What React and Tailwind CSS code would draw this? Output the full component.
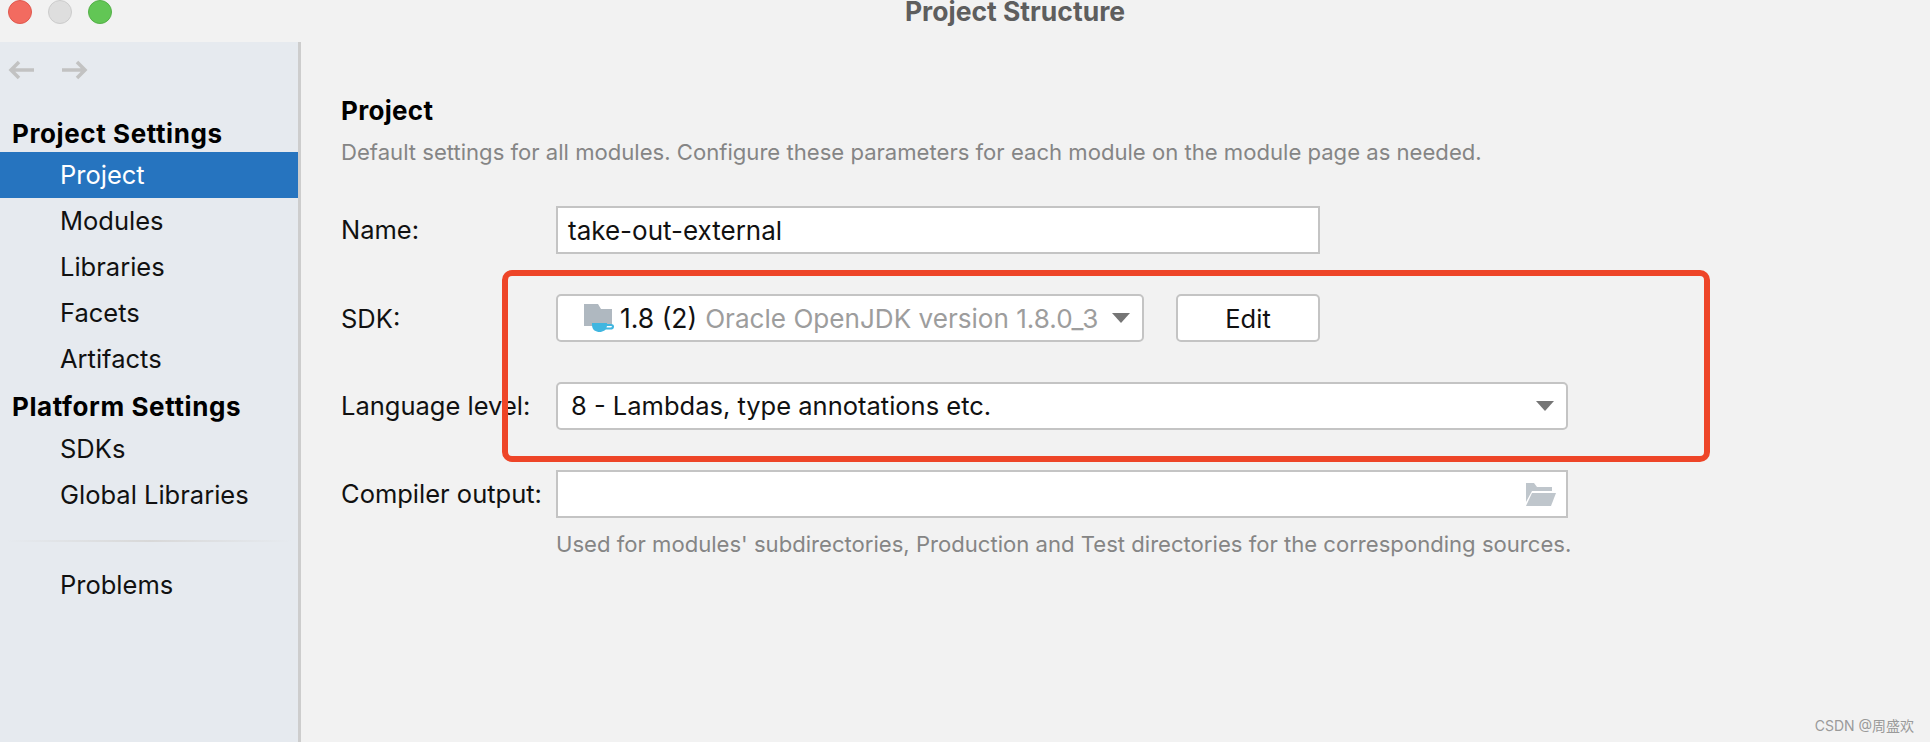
import React from 'react';

function NavItem({ label, active }) {
  return (
    <div className={`h-[46px] flex items-center pl-[60px] text-[25.5px] ${active ? 'bg-[#2674bf] text-white' : 'text-[#111111]'}`}>
      {label}
    </div>
  );
}

function Caret() {
  return (
    <svg width="18" height="10" viewBox="0 0 18 10" className="shrink-0">
      <path d="M0 0H18L9 10Z" fill="#757575" />
    </svg>
  );
}

function JdkIcon() {
  return (
    <svg width="30" height="28" viewBox="0 0 30 28" className="shrink-0">
      <path d="M0 0H14L17 5H28V22H0Z" fill="#afb8c0" />
      <path d="M8 19H23V21C23 26 19 28 15.5 28C12 28 8 26 8 21Z" fill="#40b6e0" />
      <path d="M22 21H27C30 21 29.5 24.5 26.5 24.5H21" fill="none" stroke="#40b6e0" strokeWidth="2" />
    </svg>
  );
}

function FolderOpenIcon() {
  return (
    <svg width="30" height="23" viewBox="0 0 30 23">
      <path d="M0 0H8L11 4H26V8H6L0 19Z" fill="#bfc6cc" />
      <path d="M6 10H30L25 23H0Z" fill="#bfc6cc" />
    </svg>
  );
}

function FormRow({ label, children }) {
  return (
    <div className="flex items-center h-[48px] mb-[40px]">
      <div className="w-[215px] shrink-0 text-[25.5px] text-[#111111]">{label}</div>
      {children}
    </div>
  );
}

export default function App() {
  return (
    <div className="relative w-full h-[742px] overflow-hidden bg-[#f2f2f2] font-['Inter',sans-serif]">
      {/* title bar */}
      <div className="relative h-[42px]">
        <div className="absolute left-[8px] top-0 w-[24px] h-[24px] rounded-full bg-[#f26b60] border border-[#e0584e]" />
        <div className="absolute left-[48px] top-0 w-[24px] h-[24px] rounded-full bg-[#dedede] border border-[#cccccc]" />
        <div className="absolute left-[88px] top-0 w-[24px] h-[24px] rounded-full bg-[#62c655] border border-[#54b048]" />
        <div className="text-center pl-[100px] text-[26.5px] leading-[22px] font-bold text-[#5e5e5e]">Project Structure</div>
      </div>

      <div className="flex h-[700px]">
        <aside className="w-[301px] shrink-0 bg-[#e6eaef] border-r-[3px] border-[#cdcdcd]">
          <div className="flex items-center gap-[28px] pl-[8px] h-[28px] mt-[14px] text-[#c2c2c2]">
            <svg width="26" height="20" viewBox="0 0 26 20">
              <path d="M26 10H3M11 2L3 10L11 18" fill="none" stroke="currentColor" strokeWidth="3.5" />
            </svg>
            <svg width="26" height="20" viewBox="0 0 26 20">
              <path d="M0 10H23M15 2L23 10L15 18" fill="none" stroke="currentColor" strokeWidth="3.5" />
            </svg>
          </div>
          <div className="mt-[22px]">
            <div className="h-[46px] flex items-center pt-[8px] pl-[12px] text-[26px] tracking-[0.6px] font-bold text-black">Project Settings</div>
            <NavItem label="Project" active />
            <NavItem label="Modules" />
            <NavItem label="Libraries" />
            <NavItem label="Facets" />
            <NavItem label="Artifacts" />
            <div className="h-[44px] flex items-center pt-[4px] pl-[12px] text-[26px] tracking-[0.6px] font-bold text-black">Platform Settings</div>
            <NavItem label="SDKs" />
            <NavItem label="Global Libraries" />
            <div className="h-[2px] mx-[6px] mt-[22px] mb-[20px] bg-gradient-to-r from-transparent via-[#d8d8d8] to-transparent" />
            <NavItem label="Problems" />
          </div>
        </aside>

        <main className="flex-1 pl-[40px]">
          <h1 className="mt-[53px] text-[26px] leading-[32px] tracking-[0.3px] font-bold text-black">Project</h1>
          <p className="mt-[9px] text-[22.1px] leading-[32px] text-[#858585]">
            Default settings for all modules. Configure these parameters for each module on the module page as needed.
          </p>

          <div className="mt-[38px]">
            <FormRow label="Name:">
              <div className="w-[764px] h-full flex items-center bg-white border-2 border-[#c4c4c4] pl-[10px] text-[26px] text-[#111111]">
                take-out-external
              </div>
            </FormRow>

            <FormRow label={<span className="block pt-[2px]">SDK:</span>}>
              <div className="w-[588px] h-full flex items-center bg-white border-2 border-[#c4c4c4] rounded-[5px] pl-[26px] pr-[12px] text-[26.1px]">
                <JdkIcon />
                <div className="ml-[6px] pt-[2px] w-[478px] overflow-hidden whitespace-nowrap">
                  <span className="text-[#111111] text-[26.5px]">1.8 (2)</span>
                  <span className="ml-[8px] text-[#9d9d9d]">Oracle OpenJDK version 1.8.0_332</span>
                </div>
                <div className="ml-auto"><Caret /></div>
              </div>
              <button className="ml-[32px] w-[144px] h-full pt-[2px] bg-white border-2 border-[#c4c4c4] rounded-[5px] text-[25.5px] text-[#111111]">
                Edit
              </button>
            </FormRow>

            <FormRow label="Language level:">
              <div className="w-[1012px] h-full flex items-center justify-between bg-white border-2 border-[#c4c4c4] rounded-[5px] pl-[13px] pr-[12px] text-[25.5px] text-[#111111]">
                <span>8 - Lambdas, type annotations etc.</span>
                <Caret />
              </div>
            </FormRow>

            <div className="flex items-center h-[48px]">
              <div className="w-[215px] shrink-0 text-[25.5px] text-[#111111]">Compiler output:</div>
              <div className="w-[1012px] h-full flex items-center justify-end bg-white border-2 border-[#c4c4c4] pr-[10px]">
                <FolderOpenIcon />
              </div>
            </div>

            <p className="ml-[215px] mt-[10px] text-[22.1px] leading-[32px] text-[#858585]">
              Used for modules' subdirectories, Production and Test directories for the corresponding sources.
            </p>
          </div>
        </main>
      </div>

      {/* red annotation drawn over the form */}
      <div className="absolute left-[502px] top-[270px] w-[1208px] h-[192px] border-[6px] border-[#ee4528] rounded-[10px]" />

      <div className="absolute right-[16px] bottom-[6px] text-[14px] text-[#9a9a9a] font-['Inter','Noto_Sans_CJK_SC',sans-serif]">
        CSDN @周盛欢
      </div>
    </div>
  );
}
